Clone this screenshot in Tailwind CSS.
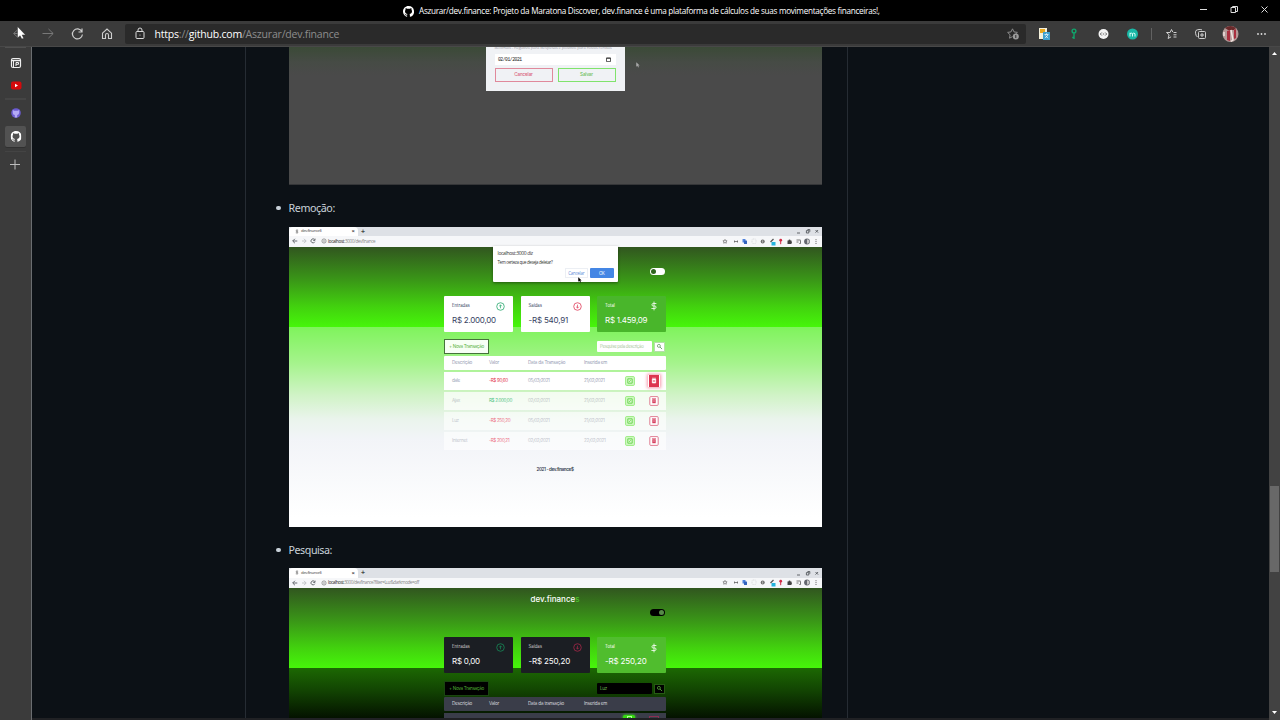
<!DOCTYPE html>
<html lang="pt-BR">
<head>
<meta charset="utf-8">
<title>Aszurar/dev.finance</title>
<script src="https://cdn.jsdelivr.net/npm/@tailwindcss/browser@4"></script>
</head>
<body class="w-[1280px] h-[720px] overflow-hidden flex flex-col bg-[#0c1116] font-['Open_Sans','Noto_Sans',sans-serif] leading-none whitespace-nowrap">
<svg width="0" height="0" class="absolute">
  <symbol id="gh" viewBox="0 0 16 16"><path fill="currentColor" d="M8 0C3.58 0 0 3.58 0 8c0 3.54 2.29 6.53 5.47 7.59.4.07.55-.17.55-.38v-1.5c-2.01.37-2.53-.49-2.69-.94-.09-.23-.48-.94-.82-1.13-.28-.15-.68-.52-.01-.53.63-.01 1.08.58 1.23.82.72 1.21 1.87.87 2.33.66.07-.52.28-.87.51-1.07-1.78-.2-3.64-.89-3.64-3.95 0-.87.31-1.59.82-2.15-.08-.2-.36-1.02.08-2.12 0 0 .67-.21 2.2.82a7.6 7.6 0 0 1 4 0c1.53-1.04 2.2-.82 2.2-.82.44 1.1.16 1.92.08 2.12.51.56.82 1.27.82 2.15 0 3.07-1.87 3.75-3.65 3.95.29.25.54.73.54 1.48v2.2c0 .21.15.46.55.38A8 8 0 0 0 8 0"/></symbol>
  <symbol id="nav" viewBox="0 0 36 10"><g fill="none" stroke="#666b70" stroke-width="1"><path d="M8.300 5H3.800M5.900 2.800 3.700 5l2.200 2.200"/><path stroke="#c2c5c8" d="M13 5h4M15 2.800 17.200 5 15 7.200"/><path d="M25.600 3.700a2 2 0 1 0 .2 2M26 2.600v1.800h-1.800"/></g></symbol>
  <symbol id="info" viewBox="0 0 6 6"><circle cx="3" cy="3" r="2.100" fill="none" stroke="#777" stroke-width=".7"/><path d="M3 2v2.200" stroke="#777" stroke-width=".7"/></symbol>
  <symbol id="exts" viewBox="0 0 100 11">
    <g fill="none" stroke="#777" stroke-width=".8">
      <path d="m4 3.400.6 1.300 1.500.1-1.100 1 .3 1.400L4 6.500l-1.300.7.3-1.400-1.100-1 1.500-.1z"/>
      <path stroke="#666" d="M13 5.500h4M13.500 4.500v2M16.500 4.500v2"/>
      <rect x="31" y="3" width="4" height="4.500" rx="1" stroke="#d5d7d9" stroke-dasharray="1 .6"/>
      <path stroke="#555" stroke-width="1.200" d="m49.500 6 3-3"/>
    </g>
    <rect x="21.500" y="3" width="3" height="3.500" rx=".5" fill="#4f82dc"/><rect x="23" y="4.500" width="3" height="3.500" rx=".5" fill="#3262bd"/>
    <circle cx="41.700" cy="5.500" r="2" fill="#6d6d6d"/><path d="M41.700 4.300v2.400" stroke="#ddd" stroke-width=".7"/>
    <rect x="50.500" y="6" width="4" height="3.500" fill="#25b4dd"/>
    <circle cx="59.700" cy="4.200" r="1.400" fill="#d22b45"/><path d="M59.700 4v4.200" stroke="#d22b45"/>
    <path d="M66.500 4.500h1a1 1 0 0 1 2 0h1v1a.9.900 0 0 1 0 1.600v1h-4z" fill="#444"/>
    <path d="M75.500 4h4M75.500 6h2M79.500 4.300v3.200h-1.200" stroke="#555" stroke-width=".8" fill="none"/>
    <circle cx="86" cy="5.500" r="2.900" fill="#646870"/><path d="M86 3.200a2.300 2.300 0 0 1 0 4.600z" fill="#c8c8c8"/>
    <path d="M95 3.200v1M95 5.100v1M95 7v1" stroke="#666" stroke-width="1"/>
  </symbol>
  <symbol id="wins" viewBox="0 0 26 8"><g fill="none" stroke="#55595e" stroke-width=".9"><path d="M3 6h3M12.400 3.600h2.400v2.400h-2.400zM13.500 2.500h2.300v2.300M21.500 3l2.600 2.600M24.100 3l-2.600 2.600"/></g></symbol>
  <symbol id="up" viewBox="0 0 10 10"><circle cx="5" cy="5" r="4.200" fill="none" stroke="currentColor" stroke-width=".9"/><path d="M5 7V3.300M3.500 4.700 5 3.200l1.500 1.500" fill="none" stroke="currentColor" stroke-width=".8"/></symbol>
  <symbol id="dollar" viewBox="0 0 8 10"><path d="M4 .6v8.800M6.400 2.500H3.200a1.200 1.200 0 0 0 0 2.500h1.600a1.200 1.200 0 0 1 0 2.500H1.400" fill="none" stroke="currentColor" stroke-width=".8"/></symbol>
  <symbol id="mag" viewBox="0 0 8 8"><circle cx="3.300" cy="3.300" r="1.700" fill="none" stroke="currentColor" stroke-width=".8"/><path d="m4.600 4.600 2.300 2.300" stroke="currentColor" stroke-width=".9"/></symbol>
  <symbol id="edit" viewBox="0 0 10 10"><rect x=".6" y=".6" width="8.800" height="8.800" rx="1" fill="#d5f8c9" stroke="#84e866" stroke-width=".8"/><path d="M2.800 2.800h4.400v4.400H2.800z" fill="none" stroke="#56cf38" stroke-width=".8"/><path d="m4.200 5.800 1.500-1.500" stroke="#56cf38" stroke-width=".8"/></symbol>
  <symbol id="del" viewBox="0 0 10 10"><rect x=".8" y=".6" width="8.400" height="8.800" rx="1" fill="#fff" stroke="#d9607a" stroke-width=".8"/><path d="M3.300 3.300h3.400v3.900H3.300z" fill="#d6405f"/><path d="M3 2.700h4" stroke="#d6405f" stroke-width=".7"/><path d="M4.200 5h1.600" stroke="#fff" stroke-width=".6"/></symbol>
  <symbol id="cur" viewBox="0 0 8 12"><path d="M.5.500v9l2.200-2 1.500 3.300 1.600-.7-1.500-3.200h3z" fill="currentColor"/></symbol>
</svg>

<!-- Title bar -->
<header class="h-[21px] shrink-0 bg-black flex items-center text-white">
  <div class="w-[1180px] pl-[403px] flex items-center pt-[2px]">
    <svg class="size-[11px]"><use href="#gh"/></svg>
    <span class="ml-[5px] text-[8.200px] tracking-[-0.300px]">Aszurar/dev.finance: Projeto da Maratona Discover, dev.finance é uma plataforma de cálculos de suas movimentações financeiras!,</span>
  </div>
  <svg class="w-[100px] h-[21px] shrink-0" viewBox="0 0 100 21" fill="none" stroke="#ddd" stroke-width="1"><path d="M20 9.500h7M51 7.500h4.500v5H51zM52.500 7.500v-1h5v5h-2M81.500 6.500l6 6M87.500 6.500l-6 6"/></svg>
</header>

<!-- Browser toolbar -->
<nav class="h-[26px] shrink-0 bg-[#3b3b3b] flex items-center border-b border-[#484848]">
  <svg class="w-[125px] h-[25px] shrink-0" viewBox="0 21 125 25" fill="none" stroke="#cfcfcf" stroke-width="1">
    <path stroke="#787878" d="M21 33.500h-7m3.500-3.500-4 3.500 4 3.500M42.500 33.500h10.500m-4.500-4.500 4.700 4.500-4.700 4.500"/>
    <path d="M81.800 31.500a5 5 0 1 0 .6 3M82 28.500v3.500h-3.500" stroke-width="1.200"/>
    <path d="M102.500 33.200 107 29l4.500 4.200v5.300h-3v-3.500a1.500 1.500 0 0 0-3 0v3.500h-3z" stroke-width="1.100"/>
    <path d="M17.500 26.500v11.500l2.600-2.300 1.700 3.400 1.900-.9-1.600-3.300h3.400z" fill="#fff" stroke="#222" stroke-width=".4"/>
  </svg>
  <div class="w-[901px] h-5 bg-[#2a2a2a] flex items-center rounded-xs">
    <svg class="ml-2.5 w-[10px] h-[13px]" viewBox="0 0 10 13" fill="none" stroke="#d8d8d8"><rect x="1" y="4.500" width="8" height="7" rx="1"/><path d="M3 4.500V3a2 2 0 0 1 4 0v1.500"/><circle cx="5" cy="8" r=".6" fill="#d8d8d8" stroke="none"/></svg>
    <span class="ml-[9.500px] pt-px text-[10.500px] text-[#8d8d8d] tracking-[-0.2px]"><span class="text-white">https</span>://<span class="text-white">github.com</span>/Aszurar/dev.finance</span>
  </div>
  <svg class="w-[254px] h-[25px]" viewBox="1026 21 254 25" fill="none" stroke="#cfcfcf">
    <rect x="1039" y="28" width="8" height="11" fill="#f4f0dc" stroke="none"/><path d="M1040 29h5v4h-5z" fill="#e9a820" stroke="none"/><rect x="1043" y="32" width="7" height="8" fill="#3d9fd0" stroke="none"/><path d="M1044.500 34.500h4M1046.500 33.300v1M1045 38.200l3-3.200M1045.500 35.500l2.500 2.700" stroke="#fff" stroke-width=".7"/>
    <circle cx="1074" cy="31" r="1.900" stroke="#10a56c" stroke-width="1.400"/><path d="M1074 33v6M1074 37.500h-1.800" stroke="#10a56c" stroke-width="1.400"/>
    <circle cx="1103.500" cy="34" r="5" fill="#f5f5f5" stroke="none"/><path d="m1101.800 32.500-1.500 1.500 1.500 1.500M1105.200 32.500l1.500 1.500-1.500 1.500M1102.800 34h1.400" stroke="#555" stroke-width=".9"/>
    <circle cx="1132.500" cy="34" r="5.500" fill="#19b8a6" stroke="none"/><path d="M1130 36.500v-3.800M1130 33.700q1.200-1.300 2.500 0v2.800M1132.500 33.700q1.300-1.300 2.500 0v2.800" stroke="#d5fff8"/>
    <path d="M1151.500 28v12" stroke="#626262"/>
    <path d="M1171.500 29.500l-1.400 3h-3.600l2.600 2.300-1 3.700 3-1.700M1171.500 29.500l1.300 2.500M1173.500 32.500h3M1173.500 34.800h3M1173.500 37h3"/>
    <path d="M1197.500 37c-2-1-2.500-5.500-1.500-6.500s5-1.500 6-.5"/><rect x="1198.500" y="31.500" width="7" height="7" rx="1"/><path d="M1202 33v4M1200 35h4"/>
    <circle cx="1230.500" cy="34" r="8" fill="#b59a98" stroke="none"/><path d="M1225 28q5.500-4 11 0l-2 2h-6z" fill="#6a2a2b" stroke="none"/><path d="M1227 40v-9l3-1v11zM1236 29v9l-2 1v-9z" fill="#a92f3f" stroke="none"/><path d="M1231 30l2 10-2 1.500M1224 32v4" stroke="#f0e5e2" stroke-width="1.500"/>
    <g fill="#ddd" stroke="none"><circle cx="1258" cy="34" r=".9"/><circle cx="1261.500" cy="34" r=".9"/><circle cx="1265" cy="34" r=".9"/></g>
  </svg>
  <svg class="absolute left-[1006px] top-[27px] w-[14px] h-[14px]" viewBox="0 0 14 14" fill="none" stroke="#8b8b8b"><path d="m6.500 1.800 1.500 3.100 3.400.5-2.500 2.400M6.500 1.800 5 4.900l-3.400.5 2.500 2.400-.6 3.400 3-1.600"/><circle cx="9.800" cy="9.500" r="3" fill="#9a9a9a" stroke="none"/><path d="M9.800 8v3" stroke="#2a2a2a"/></svg>
</nav>

<div class="flex flex-1 min-h-0">
  <!-- Vertical tabs -->
  <aside class="w-8 shrink-0 bg-[#3b3b3b] border-r border-[#6a6d70]">
    <svg class="w-[31px] h-[140px]" viewBox="0 47 31 140" fill="none">
      <path d="M5 47.500h21M5 99h21" stroke="#505050"/>
      <rect x="11.500" y="58.500" width="9" height="9" rx="1.500" stroke="#eee" stroke-width="1.200"/><path d="M11.500 60.500h9" stroke="#eee" stroke-width="1.500"/><path d="M13.500 61v6M16 66v-3.500h2.500v1.800H16" stroke="#eee"/>
      <rect x="11" y="81.500" width="10.500" height="8" rx="2" fill="#d50a0c"/><path d="m15 83.700 3 1.800-3 1.800z" fill="#fff"/>
      <circle cx="16" cy="113" r="4.800" fill="#6b5bd0"/><path d="M12.800 110l1.500.7h3.400l1.500-.7v3q-.5 2-2 2v2.500h-2.400V115q-2-.2-2-2z" fill="#b4aaf5"/>
      <rect x="5" y="127" width="21" height="21" rx="2" fill="#262626" opacity=".5"/><rect x="5" y="126" width="21" height="21" rx="2" fill="#525252"/>
      <svg x="10.500" y="131" width="11" height="11" class="text-white"><use href="#gh"/></svg>
      <path d="M5 151.500h21" stroke="#444"/><path d="M10 164.500h10M15 159.500v10" stroke="#bdbdbd"/>
    </svg>
  </aside>

  <main class="flex-1 min-w-0 overflow-hidden flex justify-start border-b-2 border-[#202124]">
    <article class="ml-[213px] w-[603px] border-x border-[#262c33] pl-[42.500px] text-[#c9d1d9]">
      <!-- Edit modal capture -->
      <section class="w-[533px] h-[138px] bg-[linear-gradient(#3b4a37,#464b45_15px,#4a4a4a_28px)] relative flex items-start pl-[197px] border-b border-[#353638]">
        <div class="w-[139px] h-[44px] bg-[#f0f2f5] px-[9px]">
          <div class="h-[6px] -mt-[2px] text-[4.300px] text-[#9da0a5]"><span class="tracking-[-0.16px]">decimais - negativo para despesas e positivo para novas rendas</span></div>
          <div class="mt-[3px] h-[11px] bg-white flex items-center justify-between px-[3.500px] pt-[1px] font-['Liberation_Mono',monospace] text-[4.700px] text-[#222] tracking-[-0.450px]"><span>02/01/2021</span>
            <svg class="size-[5px] mr-[1px] -mt-[1px]" viewBox="0 0 5 5"><path d="M.5.900h4v3.700h-4zM.5 1.400h4" fill="none" stroke="#333" stroke-width=".8"/></svg></div>
          <div class="mt-[3px] flex gap-[5px] font-['Inter',sans-serif] text-[4.600px] tracking-[-0.15px] font-medium">
            <div class="flex-1 h-[14px] border border-[#e0899b] text-[#d9607a] flex items-center justify-center pt-[1px]">Cancelar</div>
            <div class="flex-1 h-[14px] border border-[#80e36c] text-[#6cbd60] flex items-center justify-center pt-[1px]">Salvar</div>
          </div>
        </div>
        <svg class="absolute left-[347px] top-[15px] w-[4px] h-[6px] text-[#aaa]"><use href="#cur"/></svg>
      </section>

      <h3 class="mt-[16px] h-[14px] -ml-[12.500px] flex items-center font-['Noto_Sans',sans-serif] text-[10.700px]"><i class="size-[4.500px] rounded-full bg-[#c9d1d9] mr-[8px]"></i><span class="tracking-[-0.400px]">Remoção:</span></h3>

      <!-- Removal capture -->
      <section class="mt-[11.500px] w-[533px] h-[300.500px] relative flex flex-col font-['Inter',sans-serif] bg-white">
        <div class="h-[9.500px] bg-[#dee1e6] flex items-center font-['Open_Sans',sans-serif] text-[4.200px] tracking-[-0.350px] text-[#444]">
          <div class="w-[69px] h-full bg-white rounded-t-sm flex items-center pl-[6px]"><svg class="w-[4px] h-[5px] mr-[2.500px] text-[#444]"><use href="#dollar"/></svg><span>dev.finance$</span><b class="ml-auto mr-[3px] text-[6px]">×</b></div><b class="ml-[3.500px] text-[7px]">+</b>
          <svg class="ml-auto w-[26px] h-[8px] mr-[2px]"><use href="#wins"/></svg>
        </div>
        <div class="h-[10.500px] bg-[#f6f7f9] flex items-center font-['Open_Sans',sans-serif] text-[4.600px] tracking-[-0.350px] text-[#888]">
          <svg class="w-[36px] h-[10px] shrink-0 -mr-[4px]"><use href="#nav"/></svg><svg class="size-[6px]"><use href="#info"/></svg>
          <span class="ml-[1.500px]"><span class="text-[#222] font-medium">localhost</span>:3000/devfinance</span>
          <svg class="ml-auto w-[100px] h-[11px] mr-[1px]"><use href="#exts"/></svg>
        </div>
        <div class="h-[80px] bg-[linear-gradient(#31561f,#3a9817_42%,#42d20e_75%,#46f60a)]"></div>
        <div class="h-[200.500px] bg-[linear-gradient(#7ff35c,#a5f38c_18%,#d0f3c6_34%,#eaf4ec_46%,#f2f4f8_56%,#ffffff_95%)]"></div>

        <div class="absolute left-[155.500px] top-[69px] w-[222px] flex flex-col text-[4.600px]">
          <div class="flex gap-[7.500px] h-[36px] text-[#363f5f]">
            <div class="w-[69px] bg-white rounded-[1px] px-2 pt-[5.700px]"><div class="flex justify-between items-center h-[10px] text-[4.300px]"><span>Entradas</span><svg class="size-[9px]  text-[#2baa70]"><use href="#up"/></svg></div><div class="mt-[4.500px] text-[8px] tracking-[-0.25px]">R$ 2.000,00</div></div>
            <div class="w-[69px] bg-white rounded-[1px] px-2 pt-[5.700px]"><div class="flex justify-between items-center h-[10px] text-[4.300px]"><span>Saídas</span><svg class="size-[9px] rotate-180 text-[#e03e5c]"><use href="#up"/></svg></div><div class="mt-[4.500px] text-[8px] tracking-[-0.2px]">-R$ 540,91</div></div>
            <div class="w-[69px] bg-[#49b62b] rounded-[1px] px-2 pt-[5.700px] text-white"><div class="flex justify-between items-center h-[10px] text-[4.300px]"><span>Total</span><svg class="w-[8px] h-[10px]"><use href="#dollar"/></svg></div><div class="mt-[4.500px] text-[8px] tracking-[-0.25px]">R$ 1.459,09</div></div>
          </div>
          <div class="mt-[7.500px] h-[15px] flex items-center">
            <div class="w-[45px] h-[15px] border border-[#45733a] bg-[#f7fff5] text-[#57b33d] flex items-center justify-center text-[4.600px] tracking-[-0.300px] pt-[1px]">+ Nova Transação</div>
            <div class="ml-auto w-[55px] h-[11px] bg-white rounded-[1px] flex items-center pl-[3.500px] text-[#a9c7a0] text-[4.300px] tracking-[-0.260px] pt-[1px]">Pesquise pela descrição</div>
            <div class="ml-[2px] mr-[1.500px] w-[11px] h-[10px] bg-white border border-[#b5dda9] text-[#4f9150] flex items-center justify-center"><svg class="size-[7px]"><use href="#mag"/></svg></div>
          </div>
          <div class="mt-[2px] h-[14px] bg-white rounded-[1px] grid grid-cols-[37px_39px_56px_82px] items-center pl-2 text-[#969cb3] text-[4.600px] tracking-[-0.2px] pt-[.5px]"><span>Descrição</span><span>Valor</span><span>Data da Transação</span><span>Inserida em</span></div>
          <div class="mt-[2px] h-[18px] bg-white grid grid-cols-[37px_39px_56px_40.500px_24.500px_12px] items-center pl-2 text-[4.600px] tracking-[-0.350px] text-[#a0a5b8]"><span>dale</span><span class="text-[#e3344f]">-R$ 90,60</span><span>05/03/2021</span><span>21/02/2021</span><svg class="size-[10px]"><use href="#edit"/></svg><svg class="-ml-[1px] w-[12px] h-[12px] shadow-[0_0_3px_1px_#f59bad]" viewBox="0 0 12 12"><rect x="1" width="10" height="12" fill="#dd3550"/><path d="M4.300 4h3.400v4H4.300zM4 3.200h4" fill="#fff" stroke="#fff" stroke-width=".6"/><path d="M5 6h2" stroke="#dd3550"/></svg></div>
          <div class="mt-[2px] h-[18px] bg-white/75 grid grid-cols-[37px_39px_56px_40.500px_24.500px_12px] items-center pl-2 text-[4.600px] tracking-[-0.350px] text-[#c1c9c8]"><span>Ajax</span><span class="text-[#50c383]">R$ 2.000,00</span><span>02/02/2021</span><span>21/02/2021</span><svg class="size-[10px]"><use href="#edit"/></svg><svg class="size-[10px]"><use href="#del"/></svg></div>
          <div class="mt-[2px] h-[18px] bg-white/60 grid grid-cols-[37px_39px_56px_40.500px_24.500px_12px] items-center pl-2 text-[4.600px] tracking-[-0.350px] text-[#c2c6cd]"><span>Luz</span><span class="text-[#ed7085]">-R$ 250,20</span><span>05/02/2021</span><span>21/02/2021</span><svg class="size-[10px]"><use href="#edit"/></svg><svg class="size-[10px]"><use href="#del"/></svg></div>
          <div class="mt-[2px] h-[18px] bg-white/60 grid grid-cols-[37px_39px_56px_40.500px_24.500px_12px] items-center pl-2 text-[4.600px] tracking-[-0.350px] text-[#c2c6cd]"><span class="tracking-[-0.2px]">Internet</span><span class="text-[#ed7085]">-R$ 200,21</span><span>02/02/2021</span><span>22/02/2021</span><svg class="size-[10px]"><use href="#edit"/></svg><svg class="size-[10px]"><use href="#del"/></svg></div>
          <div class="mt-[18px] text-center font-semibold text-[4.600px] tracking-[-0.380px] text-[#363f4f]">2021 - dev.finance$</div>
        </div>

        <div class="absolute left-[361.500px] top-[41.500px] w-[15px] h-[7px] rounded-full bg-white flex items-center pl-[1px]"><i class="size-[5px] rounded-full bg-[#2f641e]"></i></div>

        <div class="absolute left-[204.500px] top-[19.500px] w-[124.500px] h-[36px] bg-white rounded-b-[1px] shadow-[0_1px_3px_#0006] pl-[4.500px] pt-[5px] pr-[4px] font-['Open_Sans',sans-serif] text-[#333]">
          <div class="text-[5px] tracking-[-0.350px] font-medium">localhost:3000 diz</div>
          <div class="mt-[3.500px] text-[4.400px] tracking-[-0.350px] font-medium">Tem certeza que deseja deletar?</div>
          <div class="mt-[4.100px] flex justify-end gap-[2px] text-[4.400px] tracking-[-0.2px] font-medium"><span class="w-[23.500px] h-[10px] border border-[#eceff4] text-[#5c8ad8] flex items-center justify-center">Cancelar</span><span class="w-[23.500px] h-[10px] bg-[#4486e4] text-white flex items-center justify-center rounded-[1px]">OK</span></div>
          <svg class="absolute left-[85px] top-[31px] w-[4px] h-[6px] text-black"><use href="#cur"/></svg>
        </div>
      </section>

      <h3 class="mt-[16px] h-[14px] -ml-[12.500px] flex items-center font-['Noto_Sans',sans-serif] text-[10.700px]"><i class="size-[4.500px] rounded-full bg-[#c9d1d9] mr-[8px]"></i><span class="tracking-[-0.450px]">Pesquisa:</span></h3>

      <!-- Search capture -->
      <section class="mt-[11px] w-[533px] h-[150px] overflow-hidden relative flex flex-col font-['Inter',sans-serif] bg-black">
        <div class="h-[9.500px] shrink-0 bg-[#dee1e6] flex items-center font-['Open_Sans',sans-serif] text-[4.200px] tracking-[-0.350px] text-[#444]">
          <div class="w-[69px] h-full bg-white rounded-t-sm flex items-center pl-[6px]"><svg class="w-[4px] h-[5px] mr-[2.500px] text-[#444]"><use href="#dollar"/></svg><span>dev.finance$</span><b class="ml-auto mr-[3px] text-[6px]">×</b></div><b class="ml-[3.500px] text-[7px]">+</b>
          <svg class="ml-auto w-[26px] h-[8px] mr-[2px]"><use href="#wins"/></svg>
        </div>
        <div class="h-[10.500px] shrink-0 bg-[#f6f7f9] flex items-center font-['Open_Sans',sans-serif] text-[4.600px] tracking-[-0.350px] text-[#888]">
          <svg class="w-[36px] h-[10px] shrink-0 -mr-[4px]"><use href="#nav"/></svg><svg class="size-[6px]"><use href="#info"/></svg>
          <span class="ml-[1.500px] tracking-[-0.430px]"><span class="text-[#222] font-medium">localhost</span>:3000/devfinance?filter=Luz&amp;darkmode=off</span>
          <svg class="ml-auto w-[100px] h-[11px] mr-[1px]"><use href="#exts"/></svg>
        </div>
        <div class="h-[80px] shrink-0 bg-[linear-gradient(#31561f,#3a9817_42%,#42d20e_75%,#46f60a)] flex justify-center pt-[7px] text-[8px] font-medium text-white"><span>dev.finance<span class="text-[#4fc42f]">s</span></span></div>
        <div class="h-[50px] shrink-0 bg-[linear-gradient(#1c6803,#124402_45%,#041200)]"></div>

        <div class="absolute left-[155.500px] top-[69px] w-[222px] flex flex-col text-[4.600px]">
          <div class="flex gap-[7.500px] h-[36px] text-white">
            <div class="w-[69px] bg-[#1b1e23] rounded-[1px] px-2 pt-[5.500px]"><div class="flex justify-between items-center h-[10px] text-[4.300px] text-[#ccc]"><span>Entradas</span><svg class="size-[9px] text-[#188a58]"><use href="#up"/></svg></div><div class="mt-[4.500px] text-[8px] tracking-[-0.25px]">R$ 0,00</div></div>
            <div class="w-[69px] bg-[#1b1e23] rounded-[1px] px-2 pt-[5.500px]"><div class="flex justify-between items-center h-[10px] text-[4.300px] text-[#ccc]"><span>Saídas</span><svg class="size-[9px] rotate-180 text-[#a52849]"><use href="#up"/></svg></div><div class="mt-[4.500px] text-[8px] tracking-[-0.15px]">-R$ 250,20</div></div>
            <div class="w-[69px] bg-[#50bd2e] rounded-[1px] px-2 pt-[5.500px]"><div class="flex justify-between items-center h-[10px] text-[4.300px]"><span>Total</span><svg class="w-[8px] h-[10px]"><use href="#dollar"/></svg></div><div class="mt-[4.500px] text-[8px] tracking-[-0.15px]">-R$ 250,20</div></div>
          </div>
          <div class="mt-[8px] h-[15px] flex items-center">
            <div class="w-[45px] h-[15px] border border-[#1a4410] bg-black text-[#4fae33] flex items-center justify-center text-[4.600px] tracking-[-0.300px] pt-[1px]">+ Nova Transação</div>
            <div class="ml-auto w-[55px] h-[11px] bg-black rounded-[1px] flex items-center pl-[3.500px] text-[#72bd55] text-[4.500px] tracking-[-0.2px] pt-[1px]">Luz</div>
            <div class="ml-[2px] mr-[1.500px] w-[11px] h-[10px] bg-black border border-[#275b14] text-[#63b743] flex items-center justify-center"><svg class="size-[7px]"><use href="#mag"/></svg></div>
          </div>
          <div class="mt-[1px] h-[14px] bg-[#3a3d49] rounded-[1px] grid grid-cols-[37px_39px_56px_82px] items-center pl-2 pt-[1px] text-[4.600px] tracking-[-0.2px] text-[#d5d7dd]"><span>Descrição</span><span>Valor</span><span>Data da transação</span><span>Inserida em</span></div>
          <div class="mt-[2px] h-[18px] bg-[#3a3d49] flex"><i class="mt-[2px] ml-[179px] w-[12px] h-[10px] rounded-xs bg-[#35d80f] shadow-[0_0_3px_#35f80f] flex justify-center pt-[1px]"><i class="size-[5px] border border-[#b0ff9a]"></i></i><i class="mt-[3px] ml-[14px] w-[10px] h-[10px] border border-[#8a2f50]"></i></div>
        </div>
        <div class="absolute left-[361.500px] top-[41px] w-[15px] h-[7px] rounded-full bg-black flex items-center justify-end pr-[1px]"><i class="size-[5px] rounded-full bg-[#568b48]"></i></div>
      </section>
    </article>
  </main>

  <!-- Scrollbar -->
  <div class="w-[11px] shrink-0 bg-[#424242] flex flex-col items-center">
    <svg class="w-[5px] h-[3px] mt-[5px]" viewBox="0 0 5 3"><path d="M0 3 2.500 0 5 3z" fill="#fff"/></svg>
    <div class="mt-[431px] w-[9px] h-[86px] bg-[#686868]"></div>
    <svg class="w-[5px] h-[3px] mt-auto mb-[6px]" viewBox="0 0 5 3"><path d="M0 0h5L2.500 3z" fill="#fff"/></svg>
  </div>
</div>
</body>
</html>
